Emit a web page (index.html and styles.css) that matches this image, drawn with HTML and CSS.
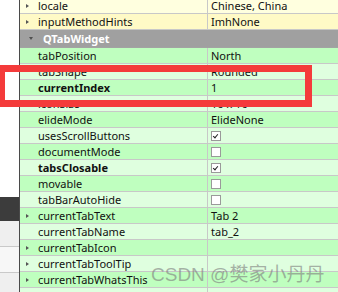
FILE: index.html
```html
<!DOCTYPE html>
<html lang="zh-CN">
<head>
    <meta charset="UTF-8">
    <title>Property Editor</title>
    <link rel="stylesheet" href="styles.css">
</head>
<body>
    <div class="editor">
        <div class="side">
            <div class="side-top"></div>
            <div class="side-dark"></div>
            <div class="side-row"></div>
            <div class="side-row light"></div>
            <div class="side-row"></div>
        </div>

        <div class="props">
            <div class="row yellow-light">
                <span class="name"><span class="twisty"><i class="arrow"></i></span>locale</span>
                <span class="value">Chinese, China</span>
            </div>
            <div class="row yellow-dark">
                <span class="name"><span class="twisty"><i class="arrow"></i></span>inputMethodHints</span>
                <span class="value">ImhNone</span>
            </div>
            <div class="group">
                <span class="twisty"><i class="arrow-down"></i></span>QTabWidget
            </div>
            <div class="row dark">
                <span class="name"><span class="twisty"></span>tabPosition</span>
                <span class="value">North</span>
            </div>
            <div class="row light">
                <span class="name"><span class="twisty"></span>tabShape</span>
                <span class="value">Rounded</span>
            </div>
            <div class="row dark">
                <span class="name bold"><span class="twisty"></span>currentIndex</span>
                <span class="value">1</span>
            </div>
            <div class="row light">
                <span class="name"><span class="twisty"></span>iconSize</span>
                <span class="value">16 x 16</span>
            </div>
            <div class="row dark">
                <span class="name"><span class="twisty"></span>elideMode</span>
                <span class="value">ElideNone</span>
            </div>
            <div class="row light">
                <span class="name"><span class="twisty"></span>usesScrollButtons</span>
                <span class="value"><i class="check on"></i></span>
            </div>
            <div class="row dark">
                <span class="name"><span class="twisty"></span>documentMode</span>
                <span class="value"><i class="check"></i></span>
            </div>
            <div class="row light">
                <span class="name bold"><span class="twisty"></span>tabsClosable</span>
                <span class="value"><i class="check on"></i></span>
            </div>
            <div class="row dark">
                <span class="name"><span class="twisty"></span>movable</span>
                <span class="value"><i class="check"></i></span>
            </div>
            <div class="row light">
                <span class="name"><span class="twisty"></span>tabBarAutoHide</span>
                <span class="value"><i class="check"></i></span>
            </div>
            <div class="row dark">
                <span class="name"><span class="twisty"><i class="arrow"></i></span>currentTabText</span>
                <span class="value">Tab 2</span>
            </div>
            <div class="row light">
                <span class="name"><span class="twisty"></span>currentTabName</span>
                <span class="value">tab_2</span>
            </div>
            <div class="row dark">
                <span class="name"><span class="twisty"><i class="arrow"></i></span>currentTabIcon</span>
                <span class="value"></span>
            </div>
            <div class="row light">
                <span class="name"><span class="twisty"><i class="arrow"></i></span>currentTabToolTip</span>
                <span class="value"></span>
            </div>
            <div class="row dark">
                <span class="name"><span class="twisty"><i class="arrow"></i></span>currentTabWhatsThis</span>
                <span class="value"></span>
            </div>
            <div class="row light">
                <span class="name"><span class="twisty"></span></span>
                <span class="value"></span>
            </div>
        </div>
    </div>

    <!-- annotation drawn over the screenshot -->
    <div class="highlight"></div>
    <div class="watermark">CSDN @樊家小丹丹</div>
</body>
</html>
```

FILE: styles.css
```css
body {
    margin: 0;
    padding: 0;
    width: 338px;
    height: 292px;
    overflow: hidden;
    position: relative;
    background-color: #ffffff;
    font-family: "Noto Sans", "DejaVu Sans", sans-serif;
    font-size: 11px;
    color: #111111;
}

.editor {
    display: flex;
}

/* strip of the window underneath */
.side {
    width: 19px;
    display: flex;
    flex-direction: column;
}

.side-top {
    height: 197px;
    background-color: #ffffff;
}

.side-dark {
    height: 24px;
    background-color: #3c3c3c;
}

.side-row {
    height: 25px;
    background-color: #efefef;
    border-bottom: 1px solid #c9c9c9;
}

.side-row.light {
    background-color: #f7f7f7;
}

/* property tree */
.props {
    flex: 1;
    margin-top: -2px;
    border-left: 1px solid #4a4a4a;
}

.row {
    display: grid;
    grid-template-columns: 188px 1fr;
    height: 15px;
    border-bottom: 1px solid #c8c8c8;
    line-height: 15px;
}

.yellow-light { background-color: #ffffdf; }
.yellow-dark { background-color: #fffac6; }
.dark { background-color: #bfffbf; }
.light { background-color: #dfffdf; }

.name {
    display: flex;
    align-items: center;
    border-right: 1px solid #c8c8c8;
    white-space: nowrap;
    overflow: hidden;
}

.name.bold {
    font-weight: bold;
}

.twisty {
    width: 18px;
    flex-shrink: 0;
    display: flex;
    align-items: center;
}

.arrow {
    margin-left: 6px;
    width: 0;
    height: 0;
    border-top: 2.5px solid transparent;
    border-bottom: 2.5px solid transparent;
    border-left: 3px solid #555555;
}

.arrow-down {
    margin-left: 9px;
    width: 0;
    height: 0;
    border-left: 2.5px solid transparent;
    border-right: 2.5px solid transparent;
    border-top: 3px solid #505050;
}

.value {
    padding-left: 3px;
    display: flex;
    align-items: center;
    white-space: nowrap;
}

.group {
    display: flex;
    align-items: center;
    height: 17px;
    border-bottom: 1px solid #a3a3a3;
    background-color: #a0a0a0;
    color: #ffffff;
    font-weight: bold;
}

.group .twisty {
    width: 23px;
}

.check {
    width: 8px;
    height: 8px;
    border: 1px solid #9a9a9a;
    background-color: #ffffff;
    position: relative;
}

.check.on::after {
    content: "";
    position: absolute;
    left: 2px;
    top: 1px;
    width: 2px;
    height: 4px;
    border-right: 1.5px solid #222222;
    border-bottom: 1.5px solid #222222;
    transform: rotate(40deg);
}

.highlight {
    position: absolute;
    left: -2px;
    top: 65px;
    width: 300px;
    height: 28px;
    border: 7px solid #f43b3b;
}

.watermark {
    position: absolute;
    left: 151px;
    top: 259px;
    font-family: "Liberation Sans", "Noto Sans CJK SC", sans-serif;
    font-size: 19px;
    color: rgba(125, 125, 125, 0.6);
    white-space: nowrap;
}
```
